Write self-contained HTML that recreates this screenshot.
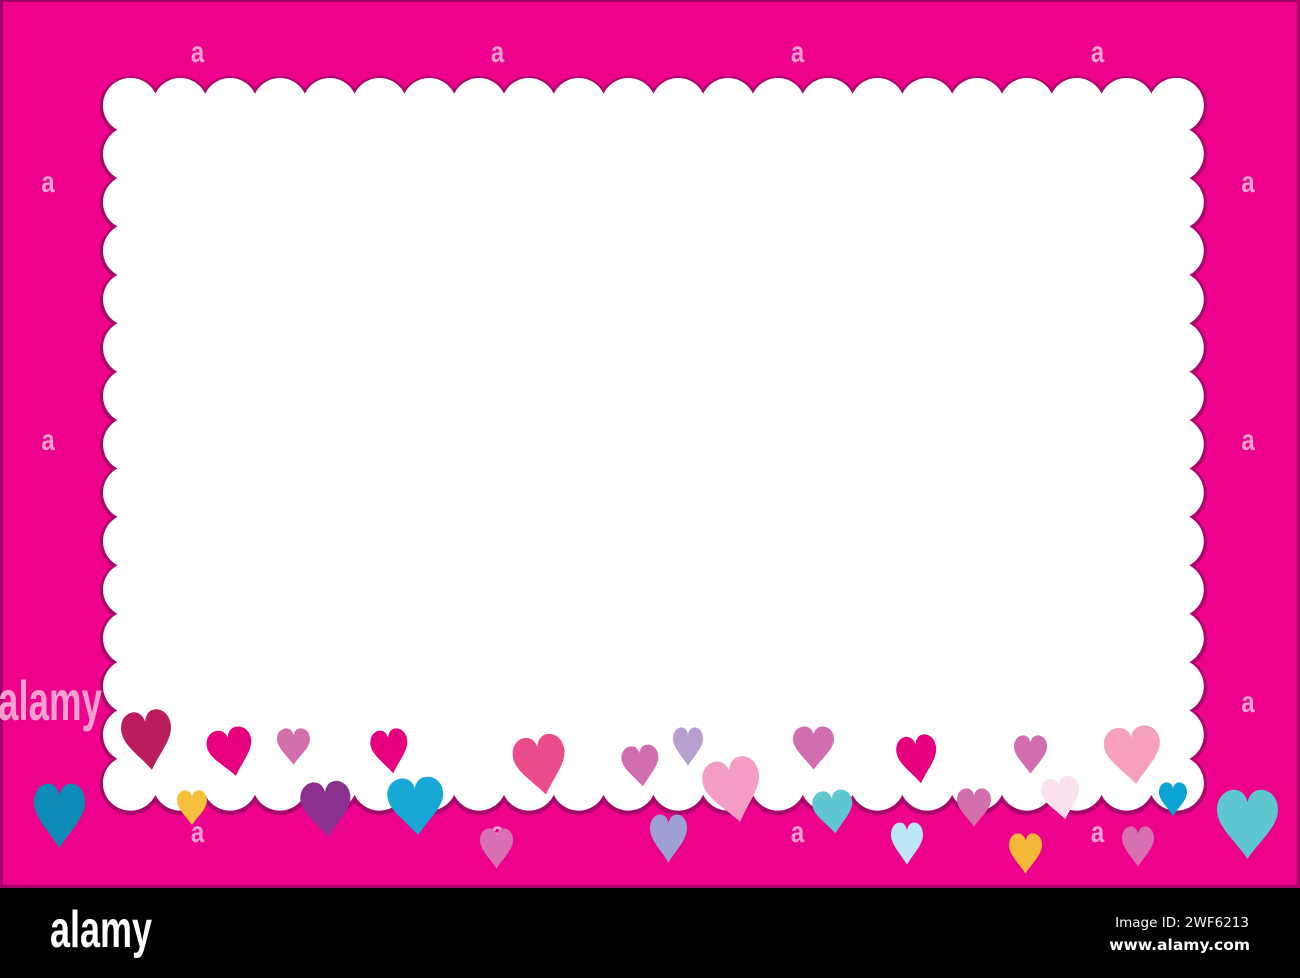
<!DOCTYPE html>
<html><head><meta charset="utf-8"><style>
html,body{margin:0;padding:0;background:#000;}
body{width:1300px;height:978px;overflow:hidden;position:relative;}
svg{position:absolute;left:0;top:0;}
.wm{font-family:"Liberation Sans Narrow","Liberation Sans",sans-serif;font-weight:bold;fill:#f6a0d2;}
</style></head><body>
<svg width="1300" height="978" viewBox="0 0 1300 978" xmlns="http://www.w3.org/2000/svg">
<defs>
<g id="row">
<circle cx="130.5" cy="0" r="27.5"/><circle cx="180.3" cy="0" r="27.5"/><circle cx="230.1" cy="0" r="27.5"/><circle cx="279.9" cy="0" r="27.5"/><circle cx="329.7" cy="0" r="27.5"/><circle cx="379.5" cy="0" r="27.5"/><circle cx="429.3" cy="0" r="27.5"/><circle cx="479.1" cy="0" r="27.5"/><circle cx="528.9" cy="0" r="27.5"/><circle cx="578.7" cy="0" r="27.5"/><circle cx="628.5" cy="0" r="27.5"/><circle cx="678.3" cy="0" r="27.5"/><circle cx="728.1" cy="0" r="27.5"/><circle cx="777.9" cy="0" r="27.5"/><circle cx="827.7" cy="0" r="27.5"/><circle cx="877.5" cy="0" r="27.5"/><circle cx="927.3" cy="0" r="27.5"/><circle cx="977.1" cy="0" r="27.5"/><circle cx="1026.9" cy="0" r="27.5"/><circle cx="1076.7" cy="0" r="27.5"/><circle cx="1126.5" cy="0" r="27.5"/><circle cx="1176.3" cy="0" r="27.5"/>
</g>
<g id="col">
<circle cx="0" cy="105.5" r="27.5"/><circle cx="0" cy="153.9" r="27.5"/><circle cx="0" cy="202.3" r="27.5"/><circle cx="0" cy="250.7" r="27.5"/><circle cx="0" cy="299.1" r="27.5"/><circle cx="0" cy="347.5" r="27.5"/><circle cx="0" cy="395.9" r="27.5"/><circle cx="0" cy="444.3" r="27.5"/><circle cx="0" cy="492.7" r="27.5"/><circle cx="0" cy="541.1" r="27.5"/><circle cx="0" cy="589.5" r="27.5"/><circle cx="0" cy="637.9" r="27.5"/><circle cx="0" cy="686.3" r="27.5"/><circle cx="0" cy="734.7" r="27.5"/><circle cx="0" cy="783.1" r="27.5"/>
</g>
<g id="rowD">
<circle cx="130.5" cy="0" r="30.5"/><circle cx="180.3" cy="0" r="30.5"/><circle cx="230.1" cy="0" r="30.5"/><circle cx="279.9" cy="0" r="30.5"/><circle cx="329.7" cy="0" r="30.5"/><circle cx="379.5" cy="0" r="30.5"/><circle cx="429.3" cy="0" r="30.5"/><circle cx="479.1" cy="0" r="30.5"/><circle cx="528.9" cy="0" r="30.5"/><circle cx="578.7" cy="0" r="30.5"/><circle cx="628.5" cy="0" r="30.5"/><circle cx="678.3" cy="0" r="30.5"/><circle cx="728.1" cy="0" r="30.5"/><circle cx="777.9" cy="0" r="30.5"/><circle cx="827.7" cy="0" r="30.5"/><circle cx="877.5" cy="0" r="30.5"/><circle cx="927.3" cy="0" r="30.5"/><circle cx="977.1" cy="0" r="30.5"/><circle cx="1026.9" cy="0" r="30.5"/><circle cx="1076.7" cy="0" r="30.5"/><circle cx="1126.5" cy="0" r="30.5"/><circle cx="1176.3" cy="0" r="30.5"/>
</g>
<g id="colD">
<circle cx="0" cy="105.5" r="30.5"/><circle cx="0" cy="153.9" r="30.5"/><circle cx="0" cy="202.3" r="30.5"/><circle cx="0" cy="250.7" r="30.5"/><circle cx="0" cy="299.1" r="30.5"/><circle cx="0" cy="347.5" r="30.5"/><circle cx="0" cy="395.9" r="30.5"/><circle cx="0" cy="444.3" r="30.5"/><circle cx="0" cy="492.7" r="30.5"/><circle cx="0" cy="541.1" r="30.5"/><circle cx="0" cy="589.5" r="30.5"/><circle cx="0" cy="637.9" r="30.5"/><circle cx="0" cy="686.3" r="30.5"/><circle cx="0" cy="734.7" r="30.5"/><circle cx="0" cy="783.1" r="30.5"/>
</g>
<path id="h" d="M50 97 C30 72 0 52 0 29 C0 11 14 1 28 1 C40 1 48 9 50 19 C52 9 60 1 72 1 C86 1 100 11 100 29 C100 52 70 72 50 97Z"/>
</defs>
<rect x="0" y="0" width="1300" height="888" fill="#a4006a"/>
<rect x="3" y="2" width="1294" height="883" fill="#ec008c"/>
<!-- frame outline -->
<g fill="#a8086c">
<use href="#rowD" transform="translate(0,106.5)"/>
<use href="#rowD" transform="translate(0,784.6)"/>
<use href="#colD" transform="translate(130.5,1)"/>
<use href="#colD" transform="translate(1176.3,1)"/>
</g>
<g fill="#ffffff">
<use href="#row" transform="translate(0,105.5)"/>
<use href="#row" transform="translate(0,783.1)"/>
<use href="#col" transform="translate(130.5,0)"/>
<use href="#col" transform="translate(1176.3,0)"/>
<rect x="130.5" y="105.5" width="1045.8" height="677.6"/>
</g>
<!-- watermark a's -->
<g class="wm" font-size="30" text-anchor="middle">
<g transform="scale(0.8,1)">
<text x="247" y="62">a</text><text x="622" y="62">a</text><text x="997" y="62">a</text><text x="1372" y="62">a</text>
<text x="60" y="192">a</text><text x="1560" y="192">a</text>
<text x="60" y="450">a</text><text x="1560" y="450">a</text>
<text x="1560" y="712">a</text>
<text x="247" y="842">a</text><text x="622" y="842">a</text><text x="997" y="842">a</text><text x="1372" y="842">a</text>
</g>
</g>
<text class="wm" x="-2" y="720" font-size="56" textLength="104" lengthAdjust="spacingAndGlyphs">alamy</text>
<!-- hearts -->
<g>
<use href="#h" fill="#bb1d5c" transform="translate(122,710) rotate(-8 25 25) scale(0.5,0.62)"/>
<use href="#h" fill="#e6007e" transform="translate(208,728) rotate(-12 22 22) scale(0.45,0.5)"/>
<use href="#h" fill="#d46fae" transform="translate(277,728) scale(0.33,0.38)"/>
<use href="#h" fill="#e6007e" transform="translate(371,729) rotate(-8 18 18) scale(0.37,0.46)"/>
<use href="#h" fill="#ea4d89" transform="translate(514,735) rotate(-10 26 26) scale(0.52,0.62)"/>
<use href="#h" fill="#d26eaf" transform="translate(622,745) rotate(-6 18 18) scale(0.37,0.43)"/>
<use href="#h" fill="#b8a0d0" transform="translate(673,727) scale(0.3,0.4)"/>
<use href="#h" fill="#f39cc4" transform="translate(704,758) rotate(-12 28 28) scale(0.57,0.67)"/>
<use href="#h" fill="#d26eaf" transform="translate(793,726) scale(0.41,0.45)"/>
<use href="#h" fill="#e6007e" transform="translate(897,735) rotate(-8 20 20) scale(0.4,0.5)"/>
<use href="#h" fill="#d26eaf" transform="translate(1014,735) scale(0.33,0.4)"/>
<use href="#h" fill="#f6a0bd" transform="translate(1105,726) rotate(-6 28 28) scale(0.56,0.6)"/>
<use href="#h" fill="#fbe1ee" transform="translate(1042,777) rotate(-10 18 18) scale(0.38,0.44)"/>
<use href="#h" fill="#0aa3d2" transform="translate(1159,782) scale(0.28,0.35)"/>
<use href="#h" fill="#5fc7cf" transform="translate(1217,789) scale(0.61,0.72)"/>
<use href="#h" fill="#f4b83b" transform="translate(1009,833) scale(0.33,0.42)"/>
<use href="#h" fill="#d86fb1" transform="translate(1122,826) scale(0.32,0.42)"/>
<use href="#h" fill="#bde6f6" transform="translate(891,822) scale(0.32,0.44)"/>
<use href="#h" fill="#d46fae" transform="translate(957,788) scale(0.34,0.4)"/>
<use href="#h" fill="#5fc7cf" transform="translate(813,790) rotate(-6 20 20) scale(0.4,0.45)"/>
<use href="#h" fill="#9ea0d2" transform="translate(650,814) scale(0.37,0.5)"/>
<use href="#h" fill="#d86fb1" transform="translate(480,828) scale(0.33,0.42)"/>
<use href="#h" fill="#17a8d6" transform="translate(388,777) rotate(-4 28 28) scale(0.56,0.6)"/>
<use href="#h" fill="#8b2f8e" transform="translate(301,781) rotate(-4 25 25) scale(0.5,0.58)"/>
<use href="#h" fill="#f5c03b" transform="translate(177,790) scale(0.3,0.36)"/>
<use href="#h" fill="#0b8bb6" transform="translate(34,783) scale(0.51,0.67)"/>
</g>
<!-- bottom bar -->
<rect x="0" y="888" width="1300" height="90" fill="#000"/>
<text x="50" y="947" font-family="'Liberation Sans Narrow','Liberation Sans',sans-serif" font-weight="bold" font-size="52" fill="#fff" textLength="102" lengthAdjust="spacingAndGlyphs">alamy</text>
<text x="1249" y="927" text-anchor="end" font-family="'DejaVu Sans','Liberation Sans',sans-serif" font-size="13.5" fill="#fff">Image ID: 2WF6213</text>
<text x="1250" y="950" text-anchor="end" font-family="'DejaVu Sans','Liberation Sans',sans-serif" font-weight="bold" font-size="15.5" fill="#fff">www.alamy.com</text>
</svg>
</body></html>
